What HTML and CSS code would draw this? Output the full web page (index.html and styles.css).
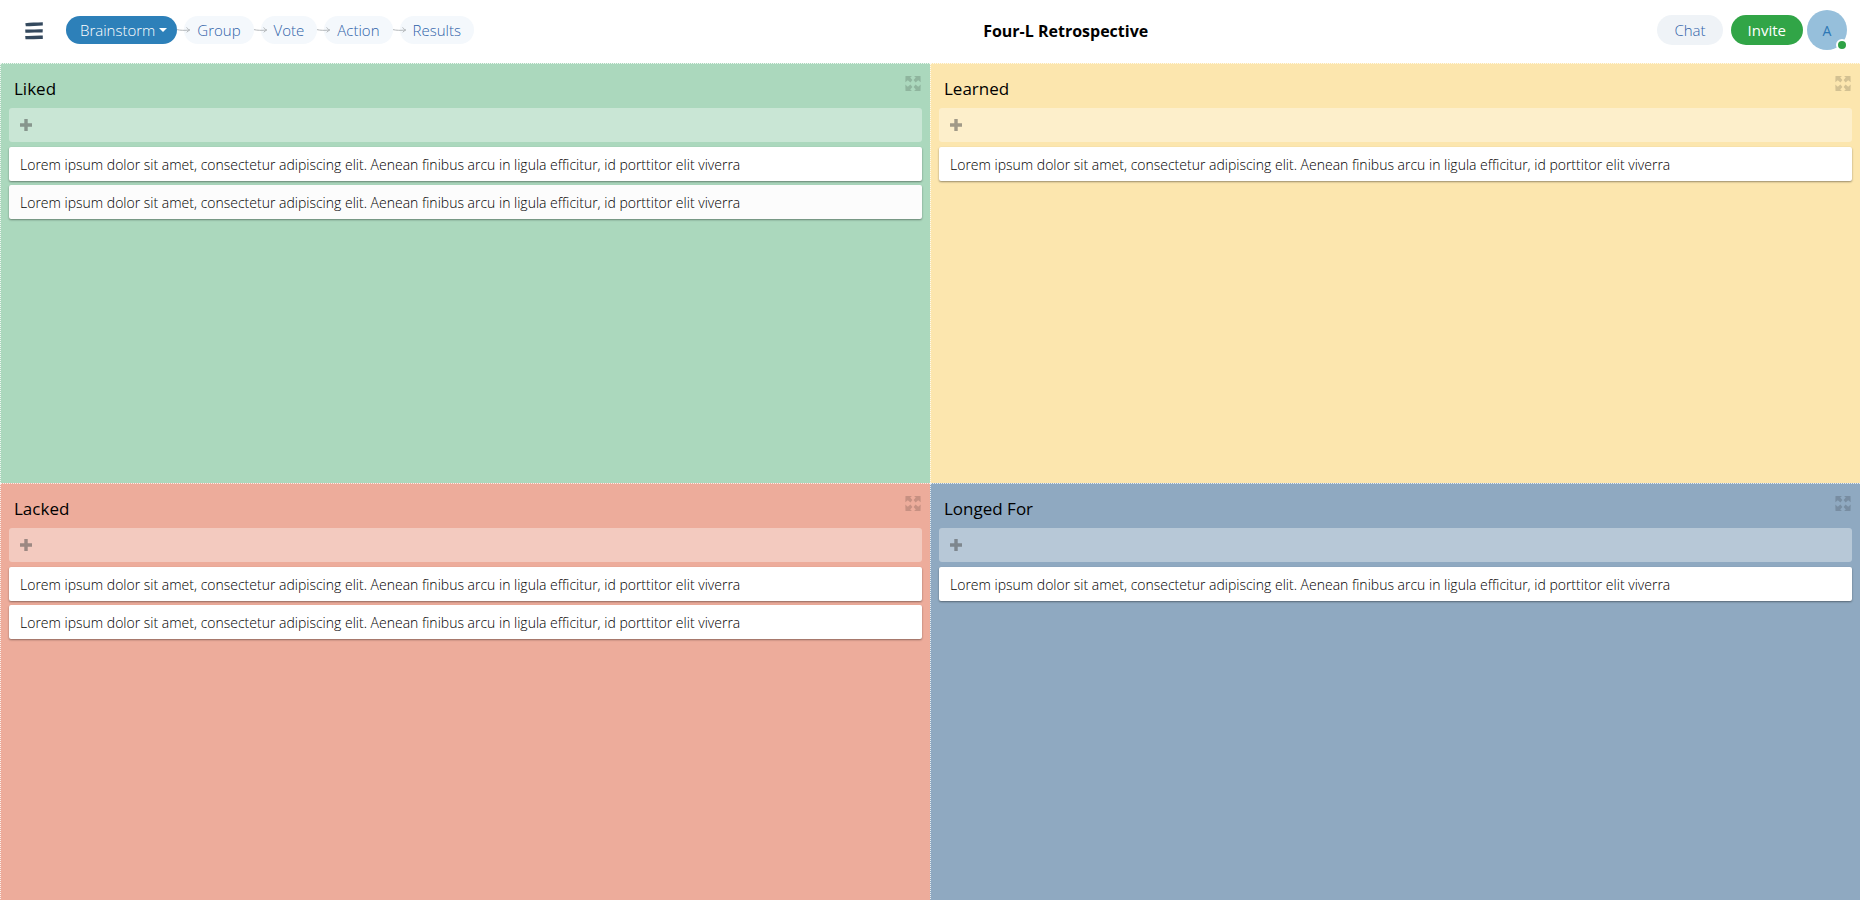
FILE: index.html
```html
<!DOCTYPE html>
<html lang="en">
<head>
  <meta charset="UTF-8" />
  <title>Four-L Retrospective</title>
  <meta name="viewport" content="width=device-width, initial-scale=1" />
  <link rel="stylesheet" href="styles.css">
</head>
<body>
  <svg class="sprite" aria-hidden="true">
    <symbol id="arrow" viewBox="0 0 14 10">
      <path d="M0 4.6C3 5.4 8 5.6 12.5 5M9.6 2.4C10.5 3.8 11.6 4.7 12.8 5C11.5 5.5 10.4 6.3 9.8 7.4" />
    </symbol>
    <symbol id="expand" viewBox="0 0 16 15">
      <path d="M0.5 0H7L5.2 1.6L7.4 4L5.4 6.4L2.8 4.2L0.3 6.2ZM15.5 0H9L10.8 1.6L8.6 4L10.6 6.4L13.2 4.2L15.7 6.2ZM0.5 15H7L5.2 13.4L7.4 11L5.4 8.6L2.8 10.8L0.3 8.4ZM15.5 15H9L10.8 13.4L8.6 11L10.6 8.6L13.2 10.8L15.7 8.4Z" />
    </symbol>
    <symbol id="plus" viewBox="0 0 12 12">
      <path d="M4.3 0H7.7V4.3H12V7.7H7.7V12H4.3V7.7H0V4.3H4.3Z" />
    </symbol>
  </svg>

  <header class="topbar">
    <button class="menu-btn" aria-label="Menu">
      <svg width="18" height="18" viewBox="0 0 18 18">
        <path d="M0.3 1.2C5 0.2 12 0.6 17.8 0.2V3.4C12 3.7 6 4.3 0.8 4.3ZM0.2 7.4C6 7.8 12 7 17.8 7.3L17.6 10.6C12 10.4 6 11 0.4 10.7ZM0.2 13.9C6 14.2 12 13.4 17.8 13.6V17C12 16.8 6 17.4 0.5 17.3Z" />
      </svg>
    </button>
    <nav class="steps" aria-label="Stages">
      <button class="step active">Brainstorm<span class="caret"></span></button>
      <svg class="arrow"><use href="#arrow" /></svg>
      <button class="step">Group</button>
      <svg class="arrow"><use href="#arrow" /></svg>
      <button class="step">Vote</button>
      <svg class="arrow"><use href="#arrow" /></svg>
      <button class="step">Action</button>
      <svg class="arrow"><use href="#arrow" /></svg>
      <button class="step">Results</button>
    </nav>
    <h1 class="board-title">Four-L Retrospective</h1>
    <div class="actions">
      <button class="pill chat">Chat</button>
      <button class="pill invite">Invite</button>
      <button class="avatar" aria-label="Account">A<span class="online"></span></button>
    </div>
  </header>

  <main class="board">
    <section class="column liked">
      <div class="column-head">
        <h2>Liked</h2>
        <button class="expand" aria-label="Expand Liked"><svg><use href="#expand" /></svg></button>
      </div>
      <button class="add" aria-label="Add to Liked"><svg><use href="#plus" /></svg></button>
      <div class="card">Lorem ipsum dolor sit amet, consectetur adipiscing elit. Aenean finibus arcu in ligula efficitur, id porttitor elit viverra</div>
      <div class="card hovered">Lorem ipsum dolor sit amet, consectetur adipiscing elit. Aenean finibus arcu in ligula efficitur, id porttitor elit viverra</div>
    </section>

    <section class="column learned">
      <div class="column-head">
        <h2>Learned</h2>
        <button class="expand" aria-label="Expand Learned"><svg><use href="#expand" /></svg></button>
      </div>
      <button class="add" aria-label="Add to Learned"><svg><use href="#plus" /></svg></button>
      <div class="card">Lorem ipsum dolor sit amet, consectetur adipiscing elit. Aenean finibus arcu in ligula efficitur, id porttitor elit viverra</div>
    </section>

    <section class="column lacked">
      <div class="column-head">
        <h2>Lacked</h2>
        <button class="expand" aria-label="Expand Lacked"><svg><use href="#expand" /></svg></button>
      </div>
      <button class="add" aria-label="Add to Lacked"><svg><use href="#plus" /></svg></button>
      <div class="card">Lorem ipsum dolor sit amet, consectetur adipiscing elit. Aenean finibus arcu in ligula efficitur, id porttitor elit viverra</div>
      <div class="card">Lorem ipsum dolor sit amet, consectetur adipiscing elit. Aenean finibus arcu in ligula efficitur, id porttitor elit viverra</div>
    </section>

    <section class="column longed">
      <div class="column-head">
        <h2>Longed For</h2>
        <button class="expand" aria-label="Expand Longed For"><svg><use href="#expand" /></svg></button>
      </div>
      <button class="add" aria-label="Add to Longed For"><svg><use href="#plus" /></svg></button>
      <div class="card">Lorem ipsum dolor sit amet, consectetur adipiscing elit. Aenean finibus arcu in ligula efficitur, id porttitor elit viverra</div>
    </section>
  </main>
</body>
</html>
```

FILE: styles.css
```css
* {
  box-sizing: border-box;
}
html, body {
  height: 100%;
  margin: 0;
  overflow: hidden;
}
body {
  font-family: 'Open Sans', 'Noto Sans', sans-serif;
  font-size: 14px;
  color: #000;
  background: #fff;
}
button {
  font: inherit;
  color: inherit;
  border: none;
  background: none;
  padding: 0;
  cursor: pointer;
}
.sprite {
  display: none;
}

/* top bar */
.topbar {
  display: flex;
  align-items: center;
  padding: 10px 13px 13px 25px;
}
.menu-btn {
  display: flex;
  padding-top: 2px;
  margin-right: 23px;
}
.menu-btn svg {
  fill: #34495e;
}
.steps {
  display: flex;
  align-items: center;
}
.step {
  display: flex;
  align-items: center;
  height: 28px;
  padding: 0 13px;
  border-radius: 14px;
  background: #f4f8fc;
  color: #2f62a8;
  font-size: 15px;
  font-weight: 300;
}
.step.active {
  padding: 0 10px 0 14px;
  background: #2d80b9;
  color: #fff;
}
.caret {
  margin-left: 4px;
  border: 4px solid transparent;
  border-top-color: #fff;
  border-bottom: none;
}
.arrow {
  width: 14px;
  height: 10px;
  margin-right: -7px;
  fill: none;
  stroke: #b4b8bb;
  z-index: 1;
}
.board-title {
  flex: 1;
  margin: 0;
  padding-top: 2px;
  text-align: center;
  font-size: 16px;
  font-weight: 700;
}
.actions {
  display: flex;
  align-items: center;
}
.pill {
  height: 30px;
  padding: 0 17px;
  border-radius: 15px;
  font-size: 15px;
}
.chat {
  margin-right: 8px;
  background: #eff3f7;
  color: #2f62a8;
  font-weight: 300;
}
.invite {
  margin-right: 4px;
  background: #31a547;
  color: #fff;
}
.avatar {
  position: relative;
  width: 40px;
  height: 40px;
  border-radius: 50%;
  background: #96bfdb;
  color: #2d78b5;
}
.online {
  position: absolute;
  right: -1px;
  bottom: -1px;
  width: 12px;
  height: 12px;
  border: 2px solid #fff;
  border-radius: 50%;
  background: #2fa245;
}

/* board */
.board {
  display: grid;
  grid-template-columns: 1fr 1fr;
  grid-auto-rows: 1fr;
  min-height: calc(100vh - 60px);
}
.column {
  padding: 8px;
  border-top: 1px dotted rgba(255, 255, 255, 0.8);
  border-left: 1px dotted rgba(255, 255, 255, 0.8);
}
.liked {
  background: #abd8bd;
}
.learned {
  background: #fce6ae;
}
.lacked {
  background: #edac9b;
}
.longed {
  background: #8fa9c1;
}
.column-head {
  display: flex;
  justify-content: space-between;
  align-items: flex-start;
  padding: 4px 1px 6px 5px;
}
.column-head h2 {
  margin: 0;
  font-size: 17px;
  line-height: 26px;
  font-weight: 400;
}
.expand svg {
  display: block;
  width: 16px;
  height: 15px;
  fill: rgba(0, 0, 0, 0.16);
}
.add {
  display: flex;
  align-items: center;
  width: 100%;
  height: 34px;
  margin-bottom: 5px;
  padding: 0 11px;
  border-radius: 3px;
  background: rgba(255, 255, 255, 0.36);
}
.add svg {
  width: 12px;
  height: 12px;
  fill: rgba(70, 70, 70, 0.5);
}
.card {
  margin-bottom: 4px;
  padding: 8px 11px 6px;
  border-radius: 2px;
  background: #fff;
  box-shadow: 0 1px 2px rgba(0, 0, 0, 0.4);
  line-height: 20px;
  font-weight: 300;
}
.card.hovered {
  background: #fcfcfc;
}
```
